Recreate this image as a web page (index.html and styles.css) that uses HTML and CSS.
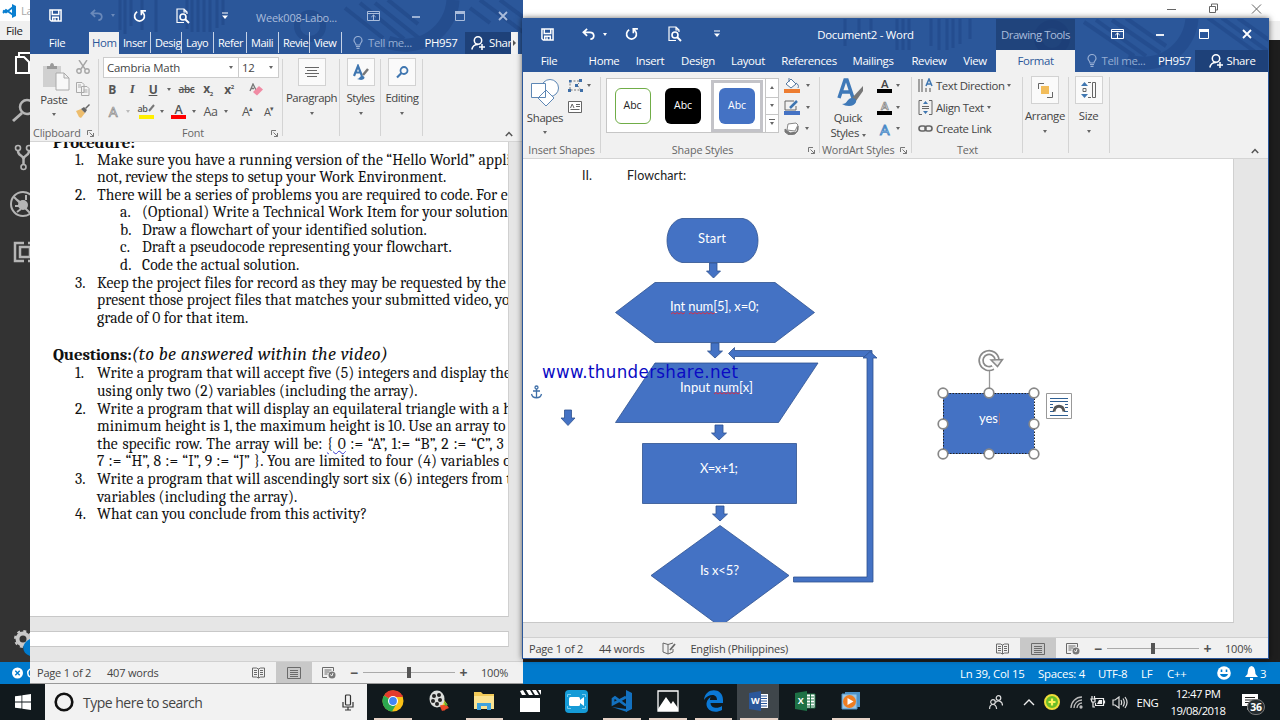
FILE: index.html
```html
<!DOCTYPE html>
<html lang="en">
<head>
  <meta charset="UTF-8">
  <title>Desktop</title>
  <link rel="stylesheet" href="styles.css">
</head>
<body>

  <!-- shared icons -->
  <svg class="defs" width="0" height="0">
    <symbol id="save" viewBox="0 0 14 14"><path d="M1 1h12v12H2.500L1 11.500zM3.500 1v5h7V1M4 13V9h6v4M6.500 10v3" fill="none" stroke="currentColor" stroke-width="1.600"/></symbol>
    <symbol id="undo" viewBox="0 0 14 14"><path d="M5.500 1 1.500 4.700l4 3.700M2 4.700h6.500c5.500 0 5.500 7.300.5 7.300" fill="none" stroke="currentColor" stroke-width="1.900"/></symbol>
    <symbol id="redo" viewBox="0 0 14 14"><path d="M4.500 2.500a5.300 5.300 0 1 0 5 0M8 1.400h5v1M9 1.200v5" fill="none" stroke="currentColor" stroke-width="1.800"/></symbol>
    <symbol id="preview" viewBox="0 0 14 16"><path d="M8 14.500H1V1h7l3 3v2M8 1v3h3" fill="none" stroke="currentColor" stroke-width="1.200"/><circle cx="7" cy="9" r="3" fill="none" stroke="currentColor" stroke-width="1.600"/><path d="m9 11 4 4" stroke="currentColor" stroke-width="2"/></symbol>
    <symbol id="custom" viewBox="0 0 6 8"><path d="M0 1h6" stroke="currentColor"/><path d="M0 3.500h6L3 7z" fill="currentColor"/></symbol>
    <symbol id="ribbonopt" viewBox="0 0 13 10"><path d="M.5.5h12v9H.5zM.5 2.500h12M6.500 9V4M4.300 6l2.200-2 2.200 2" fill="none" stroke="currentColor"/></symbol>
    <symbol id="min" viewBox="0 0 10 10"><path d="M1 6h8" stroke="currentColor" stroke-width="1.800"/></symbol>
    <symbol id="max" viewBox="0 0 10 10"><path d="M.5.500h9v9h-9z" fill="none" stroke="currentColor"/><path d="M0 1.500h10" stroke="currentColor" stroke-width="3"/></symbol>
    <symbol id="close" viewBox="0 0 10 10"><path d="m1 1 8 8m0-8L1 9" stroke="currentColor" stroke-width="1.800"/></symbol>
    <symbol id="bulb" viewBox="0 0 10 13"><path d="M3 9C3 7 1 6.500 1 4.500a4 4 0 0 1 8 0C9 6.500 7 7 7 9zM3 10.500h4M3.500 12.300h3" fill="none" stroke="currentColor" stroke-width="1.200"/></symbol>
    <symbol id="person" viewBox="0 0 14 14"><circle cx="7" cy="4.500" r="3.700" fill="none" stroke="currentColor" stroke-width="1.500"/><path d="M.8 13.500C1.500 10 4 8.500 7 8.500M8 11h6M11 8v6" fill="none" stroke="currentColor" stroke-width="1.500"/></symbol>
    <symbol id="launcher" viewBox="0 0 7 7"><path d="M.5 5V.5H5M2.500 2.500l4 4M6.500 3v3.500H3" fill="none" stroke="#777"/></symbol>
    <symbol id="collapse" viewBox="0 0 8 6"><path d="m.8 5 3.200-3.500L7.200 5" fill="none" stroke="#555" stroke-width="1.500"/></symbol>
    <symbol id="read" viewBox="0 0 13 12"><path d="M.5 1h4l2 1 2-1h4v9h-4l-2 1-2-1h-4zM6.500 2v9M2 3.500h3M2 5.500h3M2 7.500h3M8 3.500h3M8 5.500h3M8 7.500h3" fill="none" stroke="#6a6a6a"/></symbol>
    <symbol id="print" viewBox="0 0 14 12"><path d="M.5.500h13v11H.5zM3 3.500h8M3 5.500h8M3 7.500h8M3 9.500h8" fill="none" stroke="#6a6a6a"/></symbol>
    <symbol id="web" viewBox="0 0 14 12"><path d="M5 10.500H.5V.5h11V4M2.500 3h7M2.500 5h5M2.500 7h3" fill="none" stroke="#6a6a6a"/><circle cx="10" cy="8" r="3.500" fill="#777"/><path d="M8 7.500 10 9l1-3" fill="none" stroke="#eee"/></symbol>
    <symbol id="wordlogo" viewBox="0 0 20 20"><path d="M11 3h8v14h-8z" fill="#fff"/><path d="M12 5h6M12 7.500h6M12 10h6M12 12.500h6M12 15h6" stroke="#2b579a"/><path d="M0 2 12 0v20L0 18z" fill="#2b579a"/></symbol>
  </svg>

  <!-- code editor behind the documents -->
  <div class="editor">
    <div class="editor-top">
      <div class="editor-title">
        <svg width="14" height="14" viewBox="0 0 14 14"><path d="M10 0v14l4-2V2z" fill="#0a7fd0"/><path d="M10.500 3.500 4 8.500 1 6.500M1 9l3-3 6.500 4.500" fill="none" stroke="#0a7fd0" stroke-width="1.800"/></svg>
        <span>La</span>
      </div>
      <div class="editor-menu">File</div>
      <svg class="editor-controls" width="95" height="12" viewBox="0 0 95 12"><path d="M0 6.500h9M42.500 3.500h6v6h-6zM44.500 3V1h6v6h-2M85 1.500l9 9m0-9-9 9" fill="none" stroke="#666"/></svg>
    </div>
    <div class="activity">
      <svg width="30" height="620" viewBox="0 0 30 620" fill="none" stroke="#b5b5b5" stroke-width="2">
        <path d="M20 16h-1v-3h12M16 17h8l5 5v11H16z" stroke="#fff"/>
        <circle cx="27" cy="67" r="7" stroke-width="2.500"/><path d="m22 73-9 8" stroke-width="3"/>
        <g stroke-width="1.600"><circle cx="18" cy="108" r="2.500"/><circle cx="29" cy="108" r="2.500"/><circle cx="23.500" cy="127" r="2.500"/><path d="M18 111c0 5 5 4 5.500 8v5M29 111c0 5-5 4-5.500 8" stroke-width="2.500"/></g>
        <circle cx="23" cy="164" r="12"/><circle cx="23" cy="165" r="4" fill="#b5b5b5"/><path d="m14 157 16 16M16 159l4 3M15 166h5M17 172l4-3M26 155v5"/>
        <path d="M24 203h-9v18h9M20 207h10v10H20zM28 203h3M28 221h3" stroke-width="2.500"/>
        <circle cx="23" cy="599" r="5.500" stroke="#c8c8c8" stroke-width="4"/><circle cx="23" cy="599" r="8" stroke="#c8c8c8" stroke-dasharray="3 3.300"/>
        <path d="M30 599c-9 4-9 14 0 17z" fill="#007acc" stroke="none"/>
      </svg>
    </div>
    <div class="editor-status">
      <svg class="errors" width="22" height="12" viewBox="0 0 22 12"><circle cx="5.500" cy="6" r="5.500" fill="#fff"/><path d="m3.300 3.800 4.400 4.400m0-4.400L3.300 8.200" stroke="#007acc" stroke-width="1.400"/><path d="M18 2c-3 2-3 6 0 8" stroke="#fff" fill="none" stroke-width="1.500"/></svg>
      <span>Ln 39, Col 15</span><span>Spaces: 4</span><span>UTF-8</span><span>LF</span><span>C++</span>
      <svg width="14" height="14" viewBox="0 0 14 14"><circle cx="7" cy="7" r="6.800" fill="#fff"/><path d="M3 8c1 4 7 4 8 0z" fill="#007acc"/><path d="M4.500 3.500v2.500M9.500 3.500v2.500" stroke="#007acc" stroke-width="1.600"/></svg>
      <svg width="13" height="14" viewBox="0 0 13 14"><path d="M6.500 0C3 1 3 4 2.500 8L0 11h13l-2.500-3C10 4 10 1 6.500 0zM5 12h3v2H5z" fill="#fff"/></svg>
      <span>3</span>
    </div>
  </div>

  <!-- instructions document -->
  <section class="word word-back">
    <svg class="pattern" width="493" height="54" viewBox="0 0 493 54" fill="none" stroke="#1f4585" opacity=".55">
      <path d="M90 0v30M95 0v34M101 0v26M112 0v30M126 0v32M157 0v29M162 0v32M168 0v32M174 0v32M180 0v32M187 0v28M193 0v25" stroke-width="3"/>
      <circle cx="280" cy="26" r="13" stroke-width="6"/><path d="m315 8 38 30M330 3l44 36M345 3l45 36M358 0l30 24" stroke-width="4"/><path d="M358 42a48 48 0 0 0 65-42" stroke-width="13"/><path d="m450 0 43 32M470 0l23 17M440 8l20 15" stroke-width="4"/>
    </svg>
    <div class="titlebar">
      <svg width="13" height="13"><use href="#save"/></svg>
      <span class="undo faded"><svg width="13" height="13"><use href="#undo"/></svg><i class="caret"></i></span>
      <svg width="13" height="14"><use href="#redo"/></svg>
      <svg width="14" height="16"><use href="#preview"/></svg>
      <svg width="6" height="8"><use href="#custom"/></svg>
      <span class="title">Week008-Labo...</span>
      <svg width="13" height="10"><use href="#ribbonopt"/></svg>
      <svg width="10" height="10"><use href="#min"/></svg>
      <svg width="10" height="10"><use href="#max"/></svg>
      <svg width="10" height="10"><use href="#close"/></svg>
    </div>
    <nav class="tabs">
      <span class="file">File</span><i></i>
      <span class="active">Hom</span>
      <span class="cut"><b>Inser</b></span><span class="cut"><b>Desig</b></span><span class="cut"><b>Layo</b></span><span class="cut"><b>Refer</b></span><span class="cut"><b>Maili</b></span><span class="cut"><b>Revie</b></span><span class="cut"><b>View</b></span>
      <span class="tell"><svg width="10" height="13"><use href="#bulb"/></svg>Tell me...</span>
      <span>PH957</span>
      <span class="share"><svg width="14" height="14"><use href="#person"/></svg><b>Shar</b></span>
      <span class="more"><i></i></span>
    </nav>
    <div class="ribbon">
      <div class="group">
        <div class="clip">
          <div class="big">
            <svg width="28" height="30" viewBox="0 0 28 30"><path d="M1 4h18v21H1z" fill="#d0d0d0"/><path d="M5 4h3c0-4 4-4 4 0h3v3H5z" fill="#9a9a9a"/><path d="M14 11h8l5 5v12H14zM22 11v5h5" fill="#f8f8f8" stroke="#aaa"/></svg>
            <span>Paste</span><i class="caret"></i>
          </div>
          <div class="stack">
            <svg width="14" height="14" viewBox="0 0 14 14" fill="none" stroke="#a5a5a5" stroke-width="1.400"><path d="m3 0 6 9M11 0 5 9"/><circle cx="3" cy="11" r="2.200"/><circle cx="11" cy="11" r="2.200"/></svg>
            <svg width="14" height="14" viewBox="0 0 14 14" fill="#f4f4f4" stroke="#aaa"><path d="M.5.500H6l2 2v8H.5zM5.500 4.500H11l2 2v7H5.500zM7.500 8h4M7.500 10h4M2 3h3M2 5h3"/></svg>
            <svg width="14" height="14" viewBox="0 0 14 14"><path d="m0 7 5-2 4 4-4 5-2-1z" fill="#edbd6d"/><path d="m5 5 3-2 3 3-2 3z" fill="#666"/><path d="m9 4 4-4 1 1-4 4z" fill="#666"/></svg>
          </div>
        </div>
        <footer>Clipboard <svg width="7" height="7"><use href="#launcher"/></svg></footer>
      </div>
      <div class="group fonts">
        <div class="combos"><span>Cambria Math<i class="caret"></i></span><span>12<i class="caret"></i></span></div>
        <div class="fmt fmt-a">
          <b>B</b><em>I</em><u>U</u><i class="caret"></i><s>abc</s><b>x<sub>2</sub></b><b>x<sup>2</sup></b>
          <svg width="14" height="13" viewBox="0 0 14 13"><path d="m1 8 3-7 3 6M2 5.500h3" fill="none" stroke="#777" stroke-width="1.300"/><path d="m4 9 6-6 4 3.500-6 6z" fill="#f08ba4"/></svg>
        </div>
        <div class="fmt fmt-b">
          <span class="outline">A</span><i class="caret light"></i>
          <span class="bar yellow">ab<svg width="7" height="8" viewBox="0 0 7 8"><path d="M1 7 6 1" stroke="#777" stroke-width="2"/></svg></span><i class="caret"></i>
          <span class="bar red">A</span><i class="caret"></i><span>Aa</span><i class="caret"></i>
          <span class="grow">A<sup>▴</sup></span><span class="shrink">A<sup>▾</sup></span>
        </div>
        <footer>Font <svg width="7" height="7"><use href="#launcher"/></svg></footer>
      </div>
      <div class="group tile">
        <div class="box"><svg width="14" height="12" viewBox="0 0 14 12"><path d="M0 1.500h14M2 4.500h10M0 7.500h14M2 10.500h10" stroke="#666"/></svg></div>
        <span>Paragraph</span><i class="caret"></i>
      </div>
      <div class="group tile">
        <div class="box"><svg width="16" height="17" viewBox="0 0 16 17"><path d="M1 12 5 2l4 10M2.500 8.500h5" fill="none" stroke="#3f76b0" stroke-width="2.200"/><path d="m10 11 5-6" stroke="#777" stroke-width="2.500"/><path d="M4 15c3 0 3-4 6-3s1 4-2 4z" fill="#3f76b0"/></svg></div>
        <span>Styles</span><i class="caret"></i>
      </div>
      <div class="group tile">
        <div class="box"><svg width="13" height="13" viewBox="0 0 13 13"><circle cx="8" cy="4.500" r="3.500" fill="none" stroke="#3f76b0" stroke-width="1.800"/><path d="m5.500 7-4.500 4.500" stroke="#3f76b0" stroke-width="2.200"/></svg></div>
        <span>Editing</span><i class="caret"></i>
      </div>
      <svg class="collapse" width="8" height="6"><use href="#collapse"/></svg>
    </div>
    <div class="doc">
      <article class="paper">
        <h3 class="first">Procedure:</h3>
        <ol>
          <li>Make sure you have a running version of the “Hello World” appli<br>not, review the steps to setup your Work Environment.</li>
          <li>There will be a series of problems you are required to code. For e
            <ol class="alpha">
              <li>(Optional) Write a Technical Work Item for your solution</li>
              <li>Draw a flowchart of your identified solution.</li>
              <li>Draft a pseudocode representing your flowchart.</li>
              <li>Code the actual solution.</li>
            </ol>
          </li>
          <li>Keep the project files for record as they may be requested by the<br>present those project files that matches your submitted video, yo<br>grade of 0 for that item.</li>
        </ol>
        <h3>Questions:<em>(to be answered within the video)</em></h3>
        <ol>
          <li>Write a program that will accept five (5) integers and display the<br>using only two (2) variables (including the array).</li>
          <li>Write a program that will display an equilateral triangle with a h<br>minimum height is 1, the maximum height is 10. Use an array to d<br><span class="wide">the specific row. The array will be: <u>{ 0</u> := “A”, 1:= “B”, 2 := “C”, 3</span><br><span class="loose">7 := “H”, 8 := “I”, 9 := “J” }. You are limited to four (4) variables o</span></li>
          <li>Write a program that will ascendingly sort six (6) integers from t<br>variables (including the array).</li>
          <li>What can you conclude from this activity?</li>
        </ol>
      </article>
      <div class="paper next"></div>
    </div>
    <div class="statusbar">
      <span class="page">Page 1 of 2</span><span>407 words</span>
      <div class="views">
        <svg width="13" height="12"><use href="#read"/></svg><span class="on"><svg width="14" height="12"><use href="#print"/></svg></span><svg width="14" height="12"><use href="#web"/></svg>
        <b>−</b><span class="slider"><i></i></span><b>+</b><span class="pct">100%</span>
      </div>
    </div>
  </section>

  <!-- flowchart document -->
  <section class="word word-front">
    <svg class="pattern" width="747" height="54" viewBox="0 0 747 54" fill="none" stroke="#1f4585" opacity=".5">
      <path d="M323 0v28M337 0v18M349 0v12M375 0v32M381 0v32M387 0v32M409 0v28M417 0v32M425 0v32M431 0v30M438 0v26M448 0v21" stroke-width="3"/>
      <circle cx="530" cy="20" r="14" stroke-width="8"/><path d="m562 4 50 34M574 2l50 36M590 2l48 33M604 0l40 28" stroke-width="4"/><path d="M605 42a48 48 0 0 0 65-42" stroke-width="13"/><path d="m686 0 50 36M700 0l47 34M716 0l31 22" stroke-width="4"/>
    </svg>
    <div class="titlebar">
      <svg width="13" height="13"><use href="#save"/></svg>
      <span class="undo"><svg width="13" height="13"><use href="#undo"/></svg><i class="caret"></i></span>
      <svg width="13" height="14"><use href="#redo"/></svg>
      <svg width="14" height="16"><use href="#preview"/></svg>
      <svg width="6" height="8"><use href="#custom"/></svg>
      <span class="title">Document2 - Word</span>
      <span class="context">Drawing Tools</span>
      <i></i>
      <svg width="13" height="10"><use href="#ribbonopt"/></svg>
      <svg width="10" height="10"><use href="#min"/></svg>
      <svg width="10" height="10"><use href="#max"/></svg>
      <svg width="10" height="10"><use href="#close"/></svg>
    </div>
    <nav class="tabs">
      <span>File</span><span>Home</span><span>Insert</span><span>Design</span><span>Layout</span><span>References</span><span>Mailings</span><span>Review</span><span>View</span><i></i>
      <span class="active">Format</span>
      <span class="tell"><svg width="10" height="13"><use href="#bulb"/></svg>Tell me...</span>
      <span>PH957</span>
      <span class="share"><svg width="14" height="14"><use href="#person"/></svg><b>Share</b></span>
    </nav>
    <div class="ribbon">
      <div class="group">
        <div class="shapes">
          <div class="big">
            <svg width="28" height="28" viewBox="0 0 28 28" fill="#fff" stroke="#5d87b5"><circle cx="19" cy="9" r="8.500"/><path d="M.5 4.500h14v14H.5zM15 11l8 8-8 8-8-8z"/></svg>
            <span>Shapes</span><i class="caret"></i>
          </div>
          <div class="stack">
            <div><svg width="15" height="13" viewBox="0 0 15 13"><path d="m2 2 11 0-4 4 4 5H2z" fill="none" stroke="#777" stroke-dasharray="2 1.500"/><path d="M1 1h2.500v2.500H1zM11 0h3v3h-3zM0 10h3v3H0zM12 10h3v3h-3zM7 5h3v3H7z" fill="#3f6fa8"/></svg><i class="caret"></i></div>
            <svg width="14" height="12" viewBox="0 0 14 12"><path d="M.5.500h13v11H.5z" fill="#fff" stroke="#666"/><path d="M8 3.500h4M8 5.500h4M2.500 8.500h9M2.500 7l1.700-4L6 7" fill="none" stroke="#666"/></svg>
          </div>
        </div>
        <footer>Insert Shapes</footer>
      </div>
      <div class="group">
        <div class="style-row">
          <div class="gallery"><span class="thumb green">Abc</span><span class="thumb black">Abc</span><span class="picked"><span class="thumb blue">Abc</span></span></div>
          <div class="scroller"><span><i class="caret up"></i></span><span><i class="caret"></i></span><span><i class="caret lined"></i></span></div>
          <div class="rows">
            <div><svg width="16" height="15" viewBox="0 0 16 15"><path d="m2 6 5-5 5 5-5 4zM5 4V0M12 5c2 1 3 3 2 5" fill="#fff" stroke="#56789f"/><path d="M0 11h16v4H0z" fill="#ed7d31"/></svg><i class="caret"></i></div>
            <div><svg width="16" height="15" viewBox="0 0 16 15"><path d="M10 1H1v9h11V6" fill="none" stroke="#666"/><path d="m6 8 7-7" stroke="#3f76b0" stroke-width="2.500"/><path d="M0 11h16v4H0z" fill="#4472c4"/></svg><i class="caret"></i></div>
            <div><svg width="15" height="13" viewBox="0 0 15 13"><path d="m1 7 5 4 7-1 1-6v4l-3 4-6 1-4-3z" fill="#777" stroke="#777"/><path d="m4 2 8-1 2 2-3 6-8-1z" fill="#fff" stroke="#888"/></svg><i class="caret"></i></div>
          </div>
        </div>
        <footer>Shape Styles <svg width="7" height="7"><use href="#launcher"/></svg></footer>
      </div>
      <div class="group">
        <div class="wordart">
          <div class="big">
            <svg width="27" height="29" viewBox="0 0 27 29"><path d="M2 20 8 2h2l6 18M4.500 14h9" fill="none" stroke="#3f79b8" stroke-width="3.500"/><path d="m15 20 11-12v5l-7 10z" fill="#777"/><path d="M5 26c6 0 5-7 11-6s3 8-4 8c-3 0-5-1-7-2z" fill="#3f79b8"/></svg>
            <span>Quick</span><span>Styles <i class="caret"></i></span>
          </div>
          <div class="rows">
            <div><span class="bar dark">A</span><i class="caret"></i></div>
            <div><span class="bar dark hollow">A</span><i class="caret"></i></div>
            <div><span class="glow">A</span><i class="caret"></i></div>
          </div>
        </div>
        <footer>WordArt Styles <svg width="7" height="7"><use href="#launcher"/></svg></footer>
      </div>
      <div class="group">
        <div class="textcmds">
          <div><svg width="15" height="15" viewBox="0 0 15 15"><path d="M1 1v13M4 1v13M8 10v4M12 10v4" stroke="#777" stroke-width="1.300"/><path d="m8 8 3-7 3 7M9 6h4" fill="none" stroke="#3f76b0" stroke-width="1.500"/></svg>Text Direction<i class="caret"></i></div>
          <div><svg width="15" height="15" viewBox="0 0 15 15"><path d="M4 .5H1v14h3M11 .5h3v14h-3M4 6.500h7M4 8.500h7" fill="none" stroke="#666"/><path d="m5 4 2.500-3L10 4zM5 11l2.500 3 2.500-3z" fill="#3f76b0"/></svg>Align Text<i class="caret"></i></div>
          <div><svg width="15" height="7" viewBox="0 0 15 7"><rect x="1" y="1" width="7" height="5" rx="2.500" fill="none" stroke="#666" stroke-width="1.600"/><rect x="7" y="1" width="7" height="5" rx="2.500" fill="none" stroke="#666" stroke-width="1.600"/></svg>Create Link</div>
        </div>
        <footer>Text</footer>
      </div>
      <div class="group tile">
        <div class="box"><svg width="15" height="15" viewBox="0 0 15 15"><path d="M.5 6V.5H6M9 14.500h5.500V9" fill="none" stroke="#666"/><path d="M3 3h8v8H3z" fill="#f2bd5b"/></svg></div>
        <span>Arrange</span><i class="caret"></i>
      </div>
      <div class="group tile">
        <div class="box"><svg width="16" height="16" viewBox="0 0 16 16"><path d="M11.500.500h3v15h-3zM2 6.500h3v3H2zM7 .5h3M7 15.500h3" fill="none" stroke="#666"/><path d="M0 4 3.500 0 7 4zM0 12l3.500 4L7 12z" fill="#3f76b0"/></svg></div>
        <span>Size</span><i class="caret"></i>
      </div>
      <svg class="collapse" width="8" height="6"><use href="#collapse"/></svg>
    </div>
    <div class="doc">
      <div class="paper">
        <svg class="chart" width="710" height="463" viewBox="524 159 710 463">
          <g class="body-text"><text x="582" y="179.500" textLength="10">II.</text><text x="627" y="179.500" textLength="59">Flowchart:</text></g>
          <g class="shape">
            <path d="M682 218.500h61c20 4 20 40 0 44h-61c-20-4-20-40 0-44z"/>
            <path d="M655 282.500h120l39.500 30-39.500 30H655l-39.500-30z"/>
            <path d="M655 363h163l-39.500 59.500H615.500z"/>
            <path d="M642.500 443.500h154v60h-154z"/>
            <path d="m720 525.500 69 50-69 51-69-51z"/>
            <path d="M709.500 263h7.500v8h3.500l-7 7-7-7h3z"/><path d="M711 343h8v8h3.500l-7.500 7-7.500-7h3.500z"/>
            <path d="M715 425h8v8h3.500l-7.500 7-7.500-7h3.500z"/><path d="M716 506h8v8h3.500l-7.500 7-7.500-7h3.500z"/>
            <path d="M564.500 410h7v8h3.500l-7 7.500-7-7.500h3.500z"/>
            <path d="m728.500 353.500 6-6v3H872v6H734.500v3z"/><path d="M793.500 577H867V358h-4l7-6.500 7 6.500h-4v224h-79.500z"/>
          </g>
          <g class="shape-text">
            <text x="698" y="242.500" textLength="28">Start</text>
            <text x="670" y="311" textLength="89">Int num[5], x=0;</text>
            <text x="680" y="391.500" textLength="73">Input num[x]</text>
            <text x="700" y="472.500" textLength="38">X=x+1;</text>
            <text x="700" y="574.500" textLength="39">Is x&lt;5?</text>
          </g>
          <path class="squiggle" d="m671 314 2-1.500 2 1.500 2-1.500 2 1.500 2-1.500 2 1.500 2-1.500M689 314l2-1.500 2 1.500 2-1.500 2 1.500 2-1.500 2 1.500 2-1.500 2 1.500 2-1.500 2 1.500 2-1.500 2 1.500 2-1.500M714 394l2-1.500 2 1.500 2-1.500 2 1.500 2-1.500 2 1.500 2-1.500 2 1.500 2-1.500 2 1.500 2-1.500 2 1.500 2-1.500"/>
          <g class="anchor"><circle cx="536.500" cy="387.500" r="1.500"/><path d="M536.500 389v9M533 391h7M531.500 394c1 5 9 5 10 0"/></g>
          <!-- selected shape with its handles -->
          <path d="M943 393h91v61h-91z" fill="#4472c4"/><path d="M943.500 393.500h91v60h-91z" fill="none" stroke="#222" stroke-dasharray="1.500 1.500"/>
          <text class="yes" x="979" y="423" textLength="19">yes</text>
          <path d="M999.500 413v12" stroke="#8b6d86"/>
          <path d="M989.500 371v17" stroke="#999" stroke-width="1.300"/>
          <path d="M993 367.500a8 8 0 1 1 4-8" fill="none" stroke="#8a8a8a" stroke-width="5.500"/><path d="M993 367.500a8 8 0 1 1 4-8" fill="none" stroke="#fff" stroke-width="2.200"/><path d="m991 360 11.500-.5-5 7z" fill="#eee" stroke="#8a8a8a" stroke-width="1.500"/>
          <g class="handles"><circle cx="943" cy="393" r="4.800"/><circle cx="989" cy="393" r="4.800"/><circle cx="1034" cy="393" r="4.800"/><circle cx="943" cy="424" r="4.800"/><circle cx="1034" cy="424" r="4.800"/><circle cx="943" cy="454" r="4.800"/><circle cx="989" cy="454" r="4.800"/><circle cx="1034" cy="454" r="4.800"/></g>
          <path d="M1046.500 393.500h25v25h-25z" fill="#fff" stroke="#999"/><path d="M1050 398.500h18M1050 401.500h18M1050 415.500h18M1050 404.500h3M1065 404.500h3M1050 407.500h3M1065 407.500h3M1050 411.500h4M1064 411.500h4" stroke="#2f5f93"/><path d="M1054 411.500c1-7 9-7 10 0" fill="#fff" stroke="#555" stroke-width="2.800"/>
          <text class="watermark" x="542" y="378" textLength="196">www.thundershare.net</text>
        </svg>
      </div>
    </div>
    <div class="statusbar">
      <span class="page">Page 1 of 2</span><span>44 words</span>
      <svg class="proof" width="14" height="13" viewBox="0 0 14 13"><path d="M6 2.500 1 1v9l5 2zM6 2.500 11 1M6 12l5-2V7" fill="none" stroke="#666"/><path d="m8 8 5-6" stroke="#666" stroke-width="1.800"/></svg>
      <span>English (Philippines)</span>
      <div class="views">
        <svg width="13" height="12"><use href="#read"/></svg><span class="on"><svg width="14" height="12"><use href="#print"/></svg></span><svg width="14" height="12"><use href="#web"/></svg>
        <b>−</b><span class="slider"><i></i></span><b>+</b><span class="pct">100%</span>
      </div>
    </div>
  </section>

  <footer class="taskbar">
    <div class="start"><svg width="16" height="16" viewBox="0 0 16 16" fill="#fff"><path d="M0 2.300 6.500 1.400v6.200H0zM7.300 1.300 16 0v7.600H7.300zM0 8.400h6.500v6.200L0 13.700zM7.300 8.400H16V16l-8.700-1.300z"/></svg></div>
    <div class="search">
      <svg width="20" height="20" viewBox="0 0 20 20"><circle cx="10" cy="10" r="8.300" fill="none" stroke="#111" stroke-width="2.600"/></svg>
      <span>Type here to search</span>
      <svg width="12" height="17" viewBox="0 0 12 17" fill="none" stroke="#333" stroke-width="1.200"><rect x="3.500" y="1" width="5" height="10" rx="1"/><path d="M1 8v5h10V8M6 13v3M3 16h6"/></svg>
    </div>
    <div class="apps">
      <span class="open"><svg width="22" height="22" viewBox="0 0 22 22"><circle cx="11" cy="11" r="10.500" fill="#fbc116"/><path d="M11 11 2 5.500a10.500 10.500 0 0 1 18.500.5H11z" fill="#e33b2e"/><path d="M11 11 2 5.500a10.500 10.500 0 0 0 8 16l5-8.500z" fill="#2da94f"/><path d="M11 6h9.500" stroke="#e33b2e" stroke-width="2"/><circle cx="11" cy="11" r="5" fill="#fff"/><circle cx="11" cy="11" r="3.900" fill="#4285f4"/></svg></span>
      <span><svg width="22" height="22" viewBox="0 0 22 22"><path d="m11 14 6-1 4 5-7 3z" fill="#e5432d"/><path d="m14 7 5 7-6 2z" fill="#f5d13d"/><ellipse cx="9" cy="9" rx="7.500" ry="8.500" fill="#dcdedc"/><g fill="#222"><circle cx="6" cy="6" r="2"/><circle cx="11" cy="5" r="2"/><circle cx="5" cy="11" r="2"/><circle cx="12" cy="10" r="2"/><circle cx="9" cy="14" r="2"/></g><path d="m12 15 8 1-4 5z" fill="#ec4b25"/><path d="m16 11 4 4-3 1z" fill="#5ab031"/></svg></span>
      <span class="open"><svg width="22" height="20" viewBox="0 0 22 20"><path d="M1 1h7l2 2h11v15H1z" fill="#f2ca58"/><path d="M1 5h20v13H1z" fill="#fce391"/><path d="M4 19v-7h14v7h-4v-4H8v4z" fill="#3ea2dd"/></svg></span>
      <span><svg width="22" height="22" viewBox="0 0 22 22" fill="#fff"><path d="M1 8h20v14H1zM1 1l3-1 3 5H3zM7 0h4l3 5H10zM13 0h4l3 5h-4zM19 0h3v5z"/></svg></span>
      <span><svg width="23" height="23" viewBox="0 0 23 23"><rect width="23" height="23" rx="4" fill="#159bd7"/><rect x="4" y="7" width="11" height="9" rx="1.500" fill="#fff"/><path d="m15 10 4-3v9l-4-3z" fill="#fff"/><path d="M2.500 7V4.500H6M2.500 16v2.500H6M17 4.500h3.500V7M17 18.500h3.500V16" fill="none" stroke="#7acbed"/></svg></span>
      <span class="open"><svg width="22" height="22" viewBox="0 0 22 22"><path d="M15 0v22l6-3V3z" fill="#1371c0"/><path d="m15 15.500-11-8-2 1.500v5L15 7" fill="none" stroke="#1371c0" stroke-width="2.700"/><path d="M1 17 16 22l-1-3z" fill="#1371c0"/></svg></span>
      <span class="open"><svg width="22" height="22" viewBox="0 0 22 22"><path d="M1 1h20v20H1z" fill="#151b1e" stroke="#fff" stroke-width="1.300"/><path d="m1 19 8-12 5 7 2-3 5 7v3H1z" fill="#fff"/></svg></span>
      <span class="open"><svg width="21" height="22" viewBox="0 0 21 22"><path d="M1 10C2-3 20-3 20 10v3H7.500c.5 6 8 5.500 11.500 3v4C12 24 3 21 3.500 13.500 4 9 8 7 8 7c-1 1-1 2-1 3h7c0-7-9-6-13 0z" fill="#0b78d5"/></svg></span>
      <span class="open current"><span class="tile-icon"><svg width="20" height="20"><use href="#wordlogo"/></svg><b>W</b></span></span>
      <span><span class="tile-icon"><svg width="21" height="20" viewBox="0 0 21 20"><path d="M11 3h9v14h-9z" fill="#fff" stroke="#1e7145"/><path d="M12 6h7M12 9h7M12 12h7M12 15h7M15.500 3v14" stroke="#1e7145"/><path d="M0 2 12 0v20L0 18z" fill="#1e7145"/></svg><b>X</b></span></span>
      <span class="open"><svg width="20" height="20" viewBox="0 0 20 20"><path d="M4 1h15v15H4z" fill="#4e93c8"/><path d="M1 3h15v15H1z" fill="#9cc6e3" stroke="#4e93c8"/><circle cx="8.500" cy="10.500" r="6.500" fill="#ee7d22"/><path d="m6.500 7 6 3.500-6 3.500z" fill="#fff"/></svg></span>
    </div>
    <div class="tray">
      <svg class="people" width="14" height="15" viewBox="0 0 14 15" fill="none" stroke="#ddd" stroke-width="1.200"><circle cx="9.500" cy="3" r="2.300"/><circle cx="4" cy="7" r="2.300"/><path d="M.6 14c0-6 6.500-6 7 0M6.500 7.500c3-3 7-1 7 3"/></svg>
      <svg width="12" height="7" viewBox="0 0 12 7"><path d="m1 6 5-5 5 5" fill="none" stroke="#eee" stroke-width="1.400"/></svg>
      <svg width="16" height="16" viewBox="0 0 16 16"><circle cx="8" cy="8" r="7" fill="#6bbd28" stroke="#f0dd39" stroke-width="2"/><path d="M8 4.500v7M4.500 8h7" stroke="#fff35a" stroke-width="2.200"/></svg>
      <svg width="13" height="13" viewBox="0 0 13 13" fill="none" stroke="#bbb" stroke-width="1.300"><path d="M1 12A11 11 0 0 1 12 1M4 12a8 8 0 0 1 8-8M7 12a5 5 0 0 1 5-5"/><circle cx="11" cy="11" r="1" fill="#fff"/></svg>
      <svg width="16" height="12" viewBox="0 0 16 12"><path d="M4.500 2.500h9v7h-8V7M14.500 4.500v3M1 3h4v3H2zM2 0v3M4.500 0v3M3 6v5h2" fill="none" stroke="#eee" stroke-width="1.200"/><path d="M9 4h3v4H7z" fill="#eee"/></svg>
      <svg width="16" height="13" viewBox="0 0 16 13" fill="none" stroke="#ddd" stroke-width="1.200"><path d="M1 4h2l4-3v11L3 9H1zM9 4c1 2 1 3 0 5M11 2.500c2 3 2 5 0 8M13 1c3 4 3 7 0 11"/></svg>
      <span>ENG</span>
      <div class="clock"><span>12:47 PM</span><span>19/08/2018</span></div>
      <div class="notif"><svg width="16" height="16" viewBox="0 0 16 16"><path d="M0 0h16v12H9l-4 4v-4H0z" fill="#fff"/><path d="M3 3.500h10M3 6h10M3 8.500h6" stroke="#222"/></svg><b>36</b></div>
    </div>
  </footer>
</body>
</html>
```
FILE: styles.css
```css
* {
  box-sizing: border-box;
}

body {
  margin: 0;
  width: 1280px;
  height: 720px;
  overflow: hidden;
  position: relative;
  background: #1e1e1e;
  font-family: "Open Sans", "Noto Sans", sans-serif;
  font-size: 11.4px;
  letter-spacing: -0.35px;
  white-space: nowrap;
  color: #444;
}

svg {
  display: block;
  flex-shrink: 0;
}

.defs {
  position: absolute;
}

.caret {
  display: inline-block;
  border: 2.5px solid transparent;
  border-top: 3px solid #666;
  border-bottom: 0;
}
.caret.up {
  transform: rotate(180deg);
}
.caret.light {
  border-top-color: #bbb;
}

/* ---------- code editor ---------- */
.editor {
  height: 684px;
  display: flex;
  flex-direction: column;
}
.editor-top {
  height: 40px;
  background: #fff;
  position: relative;
}
.editor-title {
  height: 21px;
  padding-left: 2px;
  display: flex;
  align-items: center;
  gap: 5px;
  color: #aaa;
}
.editor-menu {
  height: 19px;
  padding-left: 6px;
  background: #f0f0f0;
  line-height: 19px;
  color: #222;
}
.editor-controls {
  position: absolute;
  top: 3px;
  right: 18px;
}
.activity {
  width: 30px;
  flex: 1;
  background: #333;
}
.editor-status {
  height: 22px;
  background: #007acc;
  color: #fff;
  letter-spacing: -0.25px;
  display: grid;
  grid-template-columns: 960px 78px 60px 43px 26px 50px 28px 15px auto;
  align-items: center;
}
.editor-status .errors {
  margin-left: 12px;
}

/* ---------- Word windows ---------- */
.word {
  position: absolute;
  display: flex;
  flex-direction: column;
  background: linear-gradient(#2b579a 54px, #f1f1f1 54px);
}
.word-back {
  left: 30px;
  top: 0;
  width: 493px;
  height: 684px;
  border-bottom: 1px solid #999;
}
.word-front {
  left: 522px;
  top: 18px;
  width: 747px;
  height: 641px;
  box-shadow: 0 0 6px rgba(0, 0, 0, 0.6);
}
/* thin accent frame, drawn over the ribbon and page edges */
.word-front::after {
  content: "";
  position: absolute;
  inset: 0;
  border: 1px solid #2b579a;
  pointer-events: none;
}
.pattern {
  position: absolute;
  left: 0;
  top: 0;
}
.titlebar,
.tabs {
  position: relative;
  color: #fff;
  display: grid;
  align-items: center;
}
.titlebar {
  height: 32px;
  padding-left: 5px;
  justify-items: center;
}
.word-back .titlebar {
  padding-bottom: 1px;
  grid-template-columns: 40px 54px 20px 68px 16px 118px 44px 42px 46px 40px;
  color: #a9bcdb;
}
.word-back .titlebar > svg:nth-child(-n+5) {
  color: #fff;
}
.word-front .titlebar {
  grid-template-columns: 40px 54px 20px 68px 16px 271px 79px 20px 44px 42px 46px 40px;
}
.undo {
  display: flex;
  align-items: center;
  gap: 8px;
}
.undo .caret {
  border-top-color: currentColor;
}
.faded {
  color: #6a89ba;
}
.title {
  padding-left: 10px;
  letter-spacing: -0.25px;
}
.word-back .title {
  padding: 3px 0 0 9px;
  font-size: 11px;
}
.context {
  height: 32px;
  width: 79px;
  text-align: center;
  line-height: 34px;
  letter-spacing: -0.5px;
  background: rgba(25, 55, 105, 0.6);
  color: #a9bcdb;
}

.tabs {
  height: 22px;
}
.tabs span {
  height: 21px;
  display: flex;
  align-items: center;
  justify-content: center;
}
.tabs .active,
.tabs .share,
.tabs .more {
  height: 22px;
  padding-bottom: 1px;
}
.tabs b {
  font-weight: normal;
}
.tabs .active {
  background: #f1f1f1;
  color: #2b579a;
}
.tabs .tell {
  gap: 5px;
  padding-left: 3px;
  color: #95add3;
}
.tabs .share {
  gap: 4px;
  background: #1e4179;
}
.word-front .tabs {
  align-items: start;
  grid-template-columns: 54px 56px 36px 60px 40px 82px 46px 66px 26px 8px 79px 79px 41px 74px;
}
.word-back .tabs {
  align-items: start;
  grid-template-columns: 54px 5px 30px 32px 31px 32px 33px 32px 31px 32px 75px 48px 46px 7px;
}
.word-back .active {
  justify-content: flex-start;
  padding-left: 3px;
}
.tabs .cut {
  padding-left: 4px;
  justify-content: flex-start;
  border-right: 1px solid #c5d2e7;
  font-size: 11px;
  letter-spacing: -0.45px;
}
.word-back .tell {
  justify-content: flex-start;
  padding-left: 11px;
}
.word-back .share {
  padding-left: 6px;
  justify-content: flex-start;
}
.tabs .more {
  background: #f4f4f4;
}
.more i {
  border: 3px solid transparent;
  border-left-color: #555;
  border-right: 0;
}

/* ribbon */
.ribbon {
  background: #f1f1f1;
  border-bottom: 1px solid #d5d5d5;
  display: grid;
  position: relative;
}
.word-back .ribbon {
  height: 88px;
  grid-template-columns: 69px 184px 57px 41px 42px auto;
}
.word-front .ribbon {
  height: 87px;
  grid-template-columns: 79px 219px 92px 111px 46px 41px auto;
}
.group {
  position: relative;
  display: flex;
  flex-direction: column;
}
.group::after {
  content: "";
  position: absolute;
  right: 0;
  top: 5px;
  bottom: 5px;
  border-right: 1px solid #d4d4d4;
}
.group footer {
  margin-top: auto;
  height: 16px;
  display: flex;
  justify-content: center;
  font-size: 10.8px;
  letter-spacing: -0.15px;
  line-height: 15px;
  color: #666;
}
.group footer svg {
  position: absolute;
  right: 5px;
  bottom: 4px;
}
.collapse {
  position: absolute;
  right: 10px;
  bottom: 4px;
}
.big {
  display: flex;
  flex-direction: column;
  align-items: center;
}
.big span {
  line-height: 15px;
}
.clip {
  display: flex;
  padding: 8px 0 0 3px;
}
.clip .big {
  width: 42px;
}
.clip .big svg {
  margin-left: 4px;
}
.clip .big .caret {
  margin-top: 6px;
}
.clip .stack {
  display: flex;
  flex-direction: column;
  gap: 8px;
  margin: -2px 0 0 1px;
}
.word-back .group:first-child footer {
  justify-content: flex-start;
  padding-left: 3px;
}
.fonts {
  padding: 3px 0 0 4px;
}
.combos {
  display: grid;
  grid-template-columns: 136px 40px;
}
.combos span {
  height: 21px;
  padding: 0 5px 0 3px;
  background: #fff;
  border: 1px solid #ccc;
  letter-spacing: -0.2px;
  display: flex;
  align-items: center;
  justify-content: space-between;
}
.combos span + span {
  border-left: 0;
}
.fmt {
  display: grid;
  align-items: center;
  justify-items: center;
  height: 22px;
  color: #555;
}
.fmt-a {
  grid-template-columns: 18px 22px 20px 12px 23px 20px 22px 32px;
  font-size: 12px;
}
.fmt-a em {
  font-weight: bold;
  font-family: "Liberation Serif", serif;
  font-size: 13px;
}
.fmt-a u {
  font-weight: bold;
}
.fmt-a s {
  font-size: 10px;
  font-weight: 600;
}
.fmt-a sub,
.fmt-a sup {
  font-size: 6px;
}
.fmt-b {
  grid-template-columns: 20px 10px 26px 6px 27px 4px 29px 2px 41px 2px;
  font-size: 12.5px;
}
.outline {
  color: #fff;
  -webkit-text-stroke: 0.7px #888;
  font-size: 14px;
}
.bar {
  width: 15px;
  height: 15px;
  line-height: 11px;
  font-weight: 600;
  border-bottom: 4px solid #000;
  display: flex;
  justify-content: center;
}
.bar.yellow {
  font-size: 9px;
  line-height: 9px;
  border-color: #ffef00;
}
.bar.red {
  border-color: #f00;
}
.grow sup,
.shrink sup {
  font-size: 7px;
  line-height: 0;
}
.shrink {
  font-size: 11px;
}
.tile {
  align-items: center;
  padding-top: 4px;
}
.box {
  width: 28px;
  height: 28px;
  border: 1px solid #d2d2d2;
  background: #fafafa;
  display: flex;
  align-items: center;
  justify-content: center;
}
.tile > span {
  margin-top: 4px;
  line-height: 15px;
}
.tile > .caret {
  margin-top: 7px;
}
.word-back .tile > span {
  letter-spacing: -0.45px;
}
.word-front .tile {
  padding-right: 2px;
}
.shapes {
  display: flex;
  padding: 7px 0 0 2px;
}
.shapes .big {
  width: 42px;
}
.shapes .big span {
  margin-top: 3px;
}
.shapes .big .caret {
  margin-top: 6px;
}
.shapes .stack {
  margin-left: 2px;
  display: flex;
  flex-direction: column;
  gap: 9px;
}
.shapes .stack > div {
  display: flex;
  align-items: center;
  gap: 4px;
}
.style-row {
  display: flex;
  padding: 6px 0 0 5px;
}
.gallery {
  width: 160px;
  height: 55px;
  padding-left: 3px;
  border: 1px solid #c6c6c6;
  background: #fff;
  display: grid;
  grid-template-columns: 45px 56px 52px;
  align-items: center;
  justify-items: center;
}
.thumb {
  width: 36px;
  height: 36px;
  border-radius: 6px;
  font-size: 10.5px;
  letter-spacing: -0.1px;
  line-height: 35px;
  text-align: center;
}
.thumb.green {
  border: 1px solid #70ad47;
  line-height: 33px;
  color: #222;
}
.thumb.black {
  background: #000;
  color: #fff;
}
.thumb.blue {
  background: #4472c4;
  color: #fff;
}
.picked {
  width: 52px;
  height: 52px;
  border: 3px solid #c3c3c8;
  display: flex;
  align-items: center;
  justify-content: center;
}
.scroller {
  width: 13px;
  height: 55px;
  display: grid;
  grid-template-rows: 1fr 1fr 1fr;
  background: #fff;
  border: 1px solid #c6c6c6;
  border-left: 0;
}
.scroller span {
  display: flex;
  align-items: center;
  justify-content: center;
}
.scroller span + span {
  border-top: 1px solid #c6c6c6;
}
.lined {
  position: relative;
}
.lined::before {
  content: "";
  position: absolute;
  left: -3px;
  top: -6px;
  width: 6px;
  border-top: 1px solid #666;
}
.rows {
  display: flex;
  flex-direction: column;
}
.rows > div {
  height: 21.5px;
  display: flex;
  align-items: center;
  gap: 6px;
}
.style-row .rows {
  margin: -3px 0 0 5px;
}
.word-front .group:nth-child(2) footer {
  padding-right: 16px;
}
.wordart {
  display: flex;
  padding: 6px 0 0 5px;
}
.wordart .big {
  width: 46px;
}
.wordart .big svg {
  margin: 0 0 3px 4px;
}
.wordart .rows {
  margin: -3px 0 0 6px;
}
.wordart .rows > div {
  gap: 4px;
}
.bar.hollow {
  color: #eee;
  -webkit-text-stroke: 0.7px #777;
}
.glow {
  width: 15px;
  text-align: center;
  color: #fff;
  font-size: 15px;
  -webkit-text-stroke: 1px #4b8bc8;
}
.word-front .group:nth-child(3) footer {
  justify-content: flex-start;
  padding-left: 2px;
}
.textcmds {
  padding: 3px 0 0 6px;
}
.textcmds div {
  height: 21.5px;
  display: flex;
  align-items: center;
  gap: 3px;
  letter-spacing: -0.4px;
}

/* documents */
.doc {
  flex: 1;
  background: #e6e6e6;
  overflow: hidden;
}
.paper {
  background: #fff;
  border-right: 1px solid #d0d0d0;
  border-bottom: 1px solid #c8c8c8;
}
.word-back .paper {
  width: 479px;
  height: 475px;
  overflow: hidden;
  padding-left: 23px;
  font: 15.6px/17.6px "Cambria", "Caladea", "Liberation Serif", serif;
  letter-spacing: 0.07px;
  color: #111;
}
.word-back .next {
  height: 16px;
  margin-top: 14px;
  border-top: 1px solid #c8c8c8;
}
.paper h3 {
  margin: 18px 0 1px;
  font-size: 17px;
  line-height: 19px;
  letter-spacing: -0.2px;
}
.paper h3 em {
  font-size: 18.2px;
  font-weight: normal;
  letter-spacing: 0.35px;
}
.paper h3.first {
  margin: -9.5px 0 0;
}
.paper ol {
  margin: 0;
  padding-left: 44px;
  counter-reset: item;
}
.paper li {
  position: relative;
  list-style: none;
  counter-increment: item;
}
.paper li::before {
  content: counter(item) ".";
  position: absolute;
  left: -22px;
}
.paper .alpha {
  padding-left: 45px;
}
.alpha li::before {
  content: counter(item, lower-alpha) ".";
}
.paper u {
  text-decoration: underline wavy #33c 1px;
}
.wide {
  word-spacing: 1.1px;
}
.loose {
  word-spacing: 0.6px;
}

.word-front .paper {
  width: 712px;
  height: 464px;
  padding-left: 2px;
}
.chart text {
  font-family: "Lato", sans-serif;
  letter-spacing: 0;
}
.body-text {
  font-size: 12.5px;
  fill: #222;
}
.shape {
  fill: #4472c4;
  stroke: #2f528f;
  stroke-width: 0.8;
}
.shape-text,
.yes {
  font-size: 13px;
  fill: #fff;
}
.squiggle {
  fill: none;
  stroke: #d0314c;
}
.anchor {
  fill: none;
  stroke: #3f6fa8;
  stroke-width: 1.3;
}
.handles {
  fill: #fff;
  stroke: #888;
  stroke-width: 1.7;
}
.chart .watermark {
  font-family: "DejaVu Sans Condensed", "DejaVu Sans", sans-serif;
  font-stretch: condensed;
  font-size: 18.5px;
  fill: #0a0ac4;
}

/* status bars */
.statusbar {
  height: 22px;
  border-top: 1px solid #d0d0d0;
  padding-left: 7px;
  display: flex;
  align-items: center;
  font-size: 11px;
  letter-spacing: -0.2px;
  background: #f1f1f1;
}
.page {
  width: 70px;
}
.proof {
  margin: 0 14px 0 18px;
}
.views {
  margin-left: auto;
  width: 283px;
  height: 21px;
  display: grid;
  grid-template-columns: 36px 36px 34px 16px 94px 15px auto;
  align-items: center;
  justify-items: center;
}
.word-front .views {
  width: 285px;
}
.on {
  width: 36px;
  height: 21px;
  background: #c8c8c8;
  display: flex;
  align-items: center;
  justify-content: center;
}
.views b {
  font-size: 14px;
  color: #555;
}
.slider {
  width: 92px;
  height: 11px;
  background: linear-gradient(#aaa, #aaa) center / 100% 1px no-repeat;
}
.slider i {
  display: block;
  width: 4px;
  height: 11px;
  margin: 0 auto;
  background: #555;
}
.pct {
  justify-self: start;
  padding-left: 10px;
}

/* ---------- taskbar ---------- */
.taskbar {
  height: 36px;
  background: #11191d;
  color: #fff;
  display: flex;
}
.start {
  width: 45px;
  display: flex;
  align-items: center;
  justify-content: center;
}
.search {
  width: 322px;
  background: #f2f2f2;
  color: #444;
  font-size: 14px;
  letter-spacing: -0.5px;
  display: flex;
  align-items: center;
  gap: 9px;
  padding: 0 13px 0 9px;
}
.search svg:last-child {
  margin-left: auto;
}
.apps {
  display: grid;
  grid-template-columns: repeat(11, 45.8px);
  margin-left: 3px;
}
.apps > span {
  display: flex;
  align-items: center;
  justify-content: center;
  border-bottom: 2px solid transparent;
}
.apps > .open {
  border-image: linear-gradient(90deg, transparent 4px, #e6d2c6 4px, #e6d2c6 42px, transparent 42px) 0 0 2;
}
.apps .current {
  background: linear-gradient(90deg, transparent 1px, #3f464b 1px, #3f464b 43px, transparent 43px);
}
.tile-icon {
  position: relative;
}
.tile-icon b {
  position: absolute;
  left: 0;
  top: 4px;
  width: 12px;
  text-align: center;
  font-size: 9px;
  line-height: 12px;
}
.tray {
  margin-left: auto;
  width: 293px;
  display: grid;
  grid-template-columns: 30px 24px 22px 26px 17px 28px 27px 74px auto;
  align-items: center;
  justify-items: center;
  font-size: 11.3px;
}
.people {
  justify-self: start;
  margin-left: 2px;
}
.clock {
  display: flex;
  flex-direction: column;
  align-items: center;
  line-height: 17px;
  letter-spacing: -0.5px;
}
.notif {
  position: relative;
  justify-self: start;
  margin-left: 7px;
}
.notif b {
  position: absolute;
  left: 5px;
  top: 5px;
  width: 18px;
  height: 16px;
  border: 1px solid #777;
  border-radius: 9px;
  background: #252c30;
  font-size: 10.5px;
  line-height: 14px;
  text-align: center;
}
```
